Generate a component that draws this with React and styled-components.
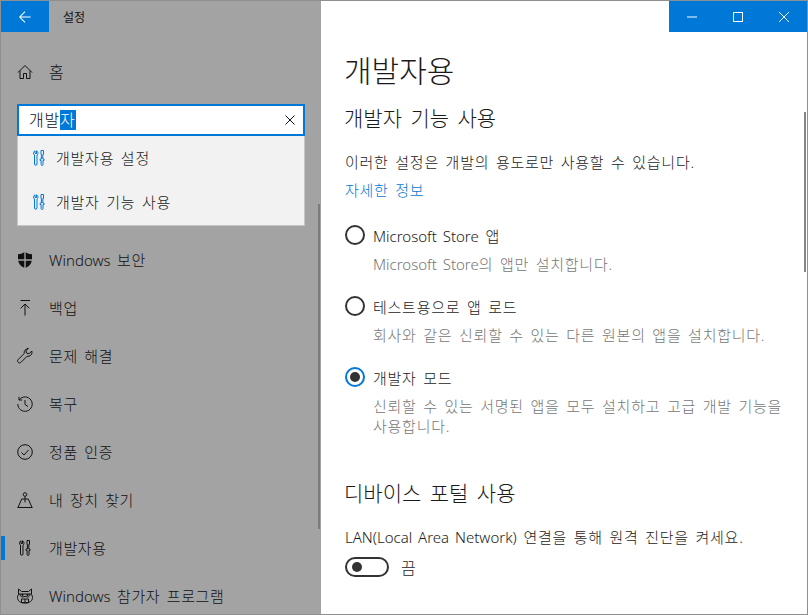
import React from "react";
import styled, { createGlobalStyle } from "styled-components";

const GlobalStyle = createGlobalStyle`
  html, body {
    margin: 0;
    padding: 0;
    background: #fff;
    font-family: "Noto Sans", "Noto Sans CJK KR", sans-serif;
  }
  * {
    box-sizing: border-box;
  }
`;

const Window = styled.div`
  display: flex;
  width: 808px;
  height: 615px;
  border: 1px solid #8f8f8f;
  overflow: hidden;
`;

const Sidebar = styled.aside`
  position: relative;
  flex: 0 0 320px;
  display: flex;
  flex-direction: column;
  overflow: hidden;
  background: #a3a3a3;
  color: #111;
`;

const TitleRow = styled.div`
  display: flex;
  flex: none;
  align-items: center;
  height: 31px;
`;

const BackButton = styled.div`
  display: flex;
  align-items: center;
  justify-content: center;
  width: 48px;
  height: 31px;
  background: #0078d7;
  color: #fff;
`;

const AppTitle = styled.span`
  margin-left: 14px;
  font-size: 12px;
  font-weight: 400;
  color: #111;
`;

const Latin = styled.span`
  letter-spacing: 0;
`;

const SideLabel = styled.span`
  margin-bottom: 2px;
`;

const NavRow = styled.div`
  position: relative;
  display: flex;
  flex: none;
  align-items: center;
  gap: 16px;
  height: 48px;
  padding-left: 16px;
  font-size: 15px;
  font-weight: 300;
  letter-spacing: 0.6px;
  word-spacing: 2px;
  white-space: nowrap;
`;

const HomeRow = styled(NavRow)`
  margin-top: 16px;
  font-size: 16px;
`;

const ActiveBar = styled.span`
  position: absolute;
  left: 0;
  top: 12px;
  width: 4px;
  height: 24px;
  background: #0078d7;
`;

const SearchWrap = styled.div`
  position: relative;
  flex: none;
  margin: 8px 0 0 16px;
  width: 288px;
  height: 32px;
`;

const SearchBox = styled.div`
  display: flex;
  align-items: center;
  justify-content: space-between;
  height: 32px;
  padding: 0 8px 0 10px;
  border: 2px solid #0078d7;
  background: #fff;
  font-size: 16px;
  font-weight: 300;
  letter-spacing: 0.8px;
  color: #111;
`;

const Selected = styled.span`
  display: inline-block;
  line-height: 20px;
  background: #0078d7;
  color: #fff;
`;

const Suggestions = styled.div`
  position: absolute;
  left: 0;
  top: 32px;
  width: 288px;
  height: 90px;
  background: #f2f2f2;
  border: 1px solid #c6c6c6;
  border-top: 0;
`;

const Suggestion = styled.div`
  display: flex;
  align-items: center;
  gap: 9px;
  height: 44px;
  padding-left: 13px;
  font-size: 15px;
  font-weight: 300;
  letter-spacing: 0.75px;
  word-spacing: 2px;
  color: #1a1a1a;
  svg {
    color: #0078d7;
  }
`;

const NavList = styled.nav`
  flex: none;
  margin-top: 100px;
`;

const SideScroll = styled.span`
  position: absolute;
  right: 1px;
  top: 203px;
  width: 2px;
  height: 325px;
  background: #7b7b7b;
`;

const Main = styled.main`
  position: relative;
  flex: 1;
  display: flex;
  flex-direction: column;
  padding-left: 24px;
  background: #fff;
  color: #1a1a1a;
`;

const WindowControls = styled.div`
  position: absolute;
  top: 0;
  right: 0;
  display: flex;
  height: 31px;
  background: #0078d7;
  color: #fff;
`;

const ControlButton = styled.div`
  display: flex;
  align-items: center;
  justify-content: center;
  width: 46px;
  height: 31px;
`;

const MainScroll = styled.span`
  position: absolute;
  right: 1px;
  top: 111px;
  width: 2px;
  height: 160px;
  background: #858585;
`;

const PageTitle = styled.h1`
  margin: 48px 0 0 -1px;
  height: 44px;
  line-height: 44px;
  font-size: 30px;
  font-weight: 300;
`;

const SectionTitle = styled.h2`
  margin: ${(props) => props.$top}px 0 0 -1px;
  height: 28px;
  line-height: 26px;
  font-size: 21px;
  font-weight: 300;
  word-spacing: 3px;
`;

const BodyText = styled.p`
  margin: ${(props) => props.$top}px 0 0;
  height: 20px;
  line-height: 20px;
  font-size: 15px;
  font-weight: 300;
  letter-spacing: 0.75px;
  word-spacing: 2px;
  white-space: nowrap;
`;

const LearnMore = styled.a`
  display: block;
  margin-top: 8px;
  height: 20px;
  line-height: 20px;
  font-size: 15px;
  font-weight: 300;
  letter-spacing: 0.75px;
  word-spacing: 2px;
  color: #0078d7;
`;

const RadioRow = styled.label`
  display: flex;
  align-items: center;
  gap: 8px;
  margin-top: ${(props) => props.$top}px;
  height: 20px;
  font-size: 15px;
  font-weight: 300;
  letter-spacing: 0.75px;
  word-spacing: 2px;
`;

const RadioCircle = styled.span`
  display: flex;
  align-items: center;
  justify-content: center;
  width: 20px;
  height: 20px;
  border-radius: 50%;
  border: 2px solid ${(props) => (props.$on ? "#0078d7" : "#333")};
  &::after {
    content: "";
    display: ${(props) => (props.$on ? "block" : "none")};
    width: 10px;
    height: 10px;
    border-radius: 50%;
    background: #333;
  }
`;

const RadioHint = styled.p`
  margin: ${(props) => props.$top}px 0 0 28px;
  width: 415px;
  line-height: 20px;
  font-size: 15px;
  font-weight: 300;
  letter-spacing: 0.75px;
  word-spacing: 2px;
  word-break: keep-all;
  color: #767676;
`;

const ToggleRow = styled.div`
  display: flex;
  align-items: center;
  gap: 12px;
  margin-top: 10px;
  height: 20px;
  font-size: 16px;
  font-weight: 300;
`;

const ToggleTrack = styled.span`
  display: flex;
  align-items: center;
  width: 44px;
  height: 20px;
  padding-left: 5px;
  border-radius: 10px;
  border: 2px solid #333;
  &::before {
    content: "";
    width: 10px;
    height: 10px;
    border-radius: 50%;
    background: #333;
  }
`;

const Glyph = ({ children, size = 16, box = 16, fill = "none", strokeWidth = 1 }) => (
  <svg
    width={size}
    height={size}
    viewBox={`0 0 ${box} ${box}`}
    fill={fill}
    stroke={fill === "none" ? "currentColor" : "none"}
    strokeWidth={strokeWidth}
    style={{ flex: "none", display: "block" }}
  >
    {children}
  </svg>
);

const DevIcon = () => (
  <Glyph>
    <path d="M4 .8v2.700h1.500v-2.700c1 .5 1.500 1.400 1.500 2.400 0 .9-.5 1.500-1 1.800v9c0 .8-.5 1.300-1.200 1.300s-1.300-.5-1.300-1.300v-9c-.5-.3-1-.9-1-1.800 0-1 .5-1.900 1.500-2.400z" />
    <path d="M10 .5h2.500v4h-.7v4.500h1.200v1.500h-1v4c0 .7-.4 1-.9 1s-1-.3-1-1v-4h-1v-1.500h1.300v-4.500h-.4z" />
  </Glyph>
);

const HomeIcon = () => (
  <Glyph>
    <path d="M1 8.500 8 1.500l7 7M3 6.800v7.700h3.500v-5h3v5h3.500v-7.700" />
  </Glyph>
);

const ShieldIcon = () => (
  <Glyph fill="currentColor">
    <path d="M7.300.3v6.900h-6.300v-5c2.400 0 4.500-.6 6.300-1.900zM8.700.3c1.800 1.300 3.900 1.900 6.300 1.900v5h-6.300zM1.200 8.700h6.100v7c-3-1-5.400-3.500-6.100-7zM8.700 8.700h6.100c-.7 3.500-3.100 6-6.100 7z" />
  </Glyph>
);

const BackupIcon = () => (
  <Glyph>
    <path d="M3.500.5h9.500M8 15.500v-11.500M3.700 8.300 8 4l4.300 4.300" />
  </Glyph>
);

const WrenchIcon = () => (
  <Glyph>
    <path d="M11 .8c-2.500 0-4.300 2.300-3.800 4.700l-6 6c-.9.9-.9 2 0 2.800.8.900 1.900.9 2.800 0l6-6c2.700.6 5-1.400 5-4 0-.5-.1-.9-.2-1.300l-2.800 2.800-2.400-.7-.7-2.400 2.800-2.700c-.6-.2-1.100-.2-1.700-.2z" />
  </Glyph>
);

const HistoryIcon = () => (
  <Glyph>
    <path d="M2.300 3.700a7.200 7.200 0 1 1-1.500 4.300M2 .8v3.200h3.200M8 4v4.500l3 2" />
  </Glyph>
);

const CheckIcon = () => (
  <Glyph>
    <circle cx="8" cy="8" r="7.300" />
    <path d="M4.500 8.500 7 11l4.700-5.200" />
  </Glyph>
);

const FindIcon = () => (
  <Glyph>
    <circle cx="8" cy="2.500" r="1.800" />
    <path d="M8 4.300v6M4.700 7h6.600M4.700 7 1 15.500h14L11.300 7M.5 15.500h15" />
  </Glyph>
);

const NinjaIcon = () => (
  <Glyph>
    <path d="M1.500 1v5.500c-.8 1-1 2-1 3 0 3.500 3 5.500 7.500 5.500s7.500-2 7.500-5.500c0-1-.2-2-1-3v-5.500l-3 2.500h-7z" />
    <path d="M2 6h12M3 6c0 2 1.300 3 2.500 3s1.500-.7 2.500-.7 1.300.7 2.500.7 2.500-1 2.500-3" />
    <path d="M4.500 11h7v3.700h-7zM8 11v3.700" />
    <circle cx="5.500" cy="7" r=".7" fill="currentColor" />
    <circle cx="10.500" cy="7" r=".7" fill="currentColor" />
  </Glyph>
);

// latin runs keep their natural width, only the hangul gets spread out
const Mixed = ({ text }) =>
  text.split(/([A-Za-z()]+(?: [A-Za-z()]+)*)/).map((part, i) =>
    i % 2 ? <Latin key={i}>{part}</Latin> : part
  );

const navItems = [
  { label: "Windows 보안", icon: <ShieldIcon /> },
  { label: "백업", icon: <BackupIcon /> },
  { label: "문제 해결", icon: <WrenchIcon /> },
  { label: "복구", icon: <HistoryIcon /> },
  { label: "정품 인증", icon: <CheckIcon /> },
  { label: "내 장치 찾기", icon: <FindIcon /> },
  { label: "개발자용", icon: <DevIcon />, active: true },
  { label: "Windows 참가자 프로그램", icon: <NinjaIcon /> },
];

const radios = [
  { label: "Microsoft Store 앱", hint: "Microsoft Store의 앱만 설치합니다.", top: 25, hintTop: 9 },
  { label: "테스트용으로 앱 로드", hint: "회사와 같은 신뢰할 수 있는 다른 원본의 앱을 설치합니다.", top: 22, hintTop: 9 },
  {
    label: "개발자 모드",
    hint: "신뢰할 수 있는 서명된 앱을 모두 설치하고 고급 개발 기능을 사용합니다.",
    top: 22,
    hintTop: 9,
    on: true,
  },
];

export default function App() {
  return (
    <>
      <GlobalStyle />
      <Window>
        <Sidebar>
          <TitleRow>
            <BackButton>
              <Glyph size={12}>
                <path d="M15.500 8H1M8 .8 1 8l7 7.200" strokeWidth="1.400" />
              </Glyph>
            </BackButton>
            <AppTitle>설정</AppTitle>
          </TitleRow>
          <HomeRow>
            <HomeIcon />
            <SideLabel>홈</SideLabel>
          </HomeRow>
          <SearchWrap>
            <SearchBox>
              <SideLabel>
                개발<Selected>자</Selected>
              </SideLabel>
              <Glyph size={10} box={10}>
                <path d="M.5.5l9 9M9.500.5l-9 9" />
              </Glyph>
            </SearchBox>
            <Suggestions>
              <Suggestion>
                <DevIcon />
                <SideLabel>개발자용 설정</SideLabel>
              </Suggestion>
              <Suggestion>
                <DevIcon />
                <SideLabel>개발자 기능 사용</SideLabel>
              </Suggestion>
            </Suggestions>
          </SearchWrap>
          <NavList>
            {navItems.map((item) => (
              <NavRow key={item.label}>
                {item.active && <ActiveBar />}
                {item.icon}
                <SideLabel>
                  <Mixed text={item.label} />
                </SideLabel>
              </NavRow>
            ))}
          </NavList>
          <SideScroll />
        </Sidebar>
        <Main>
          <WindowControls>
            <ControlButton>
              <Glyph size={10} box={10}>
                <path d="M0 5h10" />
              </Glyph>
            </ControlButton>
            <ControlButton>
              <Glyph size={10} box={10}>
                <rect x=".5" y=".5" width="9" height="9" />
              </Glyph>
            </ControlButton>
            <ControlButton>
              <Glyph size={10} box={10}>
                <path d="M0 0l10 10M10 0 0 10" />
              </Glyph>
            </ControlButton>
          </WindowControls>
          <PageTitle>개발자용</PageTitle>
          <SectionTitle $top={12}>개발자 기능 사용</SectionTitle>
          <BodyText $top={19}>이러한 설정은 개발의 용도로만 사용할 수 있습니다.</BodyText>
          <LearnMore>자세한 정보</LearnMore>
          {radios.map((radio) => (
            <React.Fragment key={radio.label}>
              <RadioRow $top={radio.top}>
                <RadioCircle $on={radio.on} />
                <span>
                  <Mixed text={radio.label} />
                </span>
              </RadioRow>
              <RadioHint $top={radio.hintTop}>
                <Mixed text={radio.hint} />
              </RadioHint>
            </React.Fragment>
          ))}
          <SectionTitle $top={44}>디바이스 포털 사용</SectionTitle>
          <BodyText $top={19}>
            <Mixed text="LAN(Local Area Network) 연결을 통해 원격 진단을 켜세요." />
          </BodyText>
          <ToggleRow>
            <ToggleTrack />끔
          </ToggleRow>
          <MainScroll />
        </Main>
      </Window>
    </>
  );
}
